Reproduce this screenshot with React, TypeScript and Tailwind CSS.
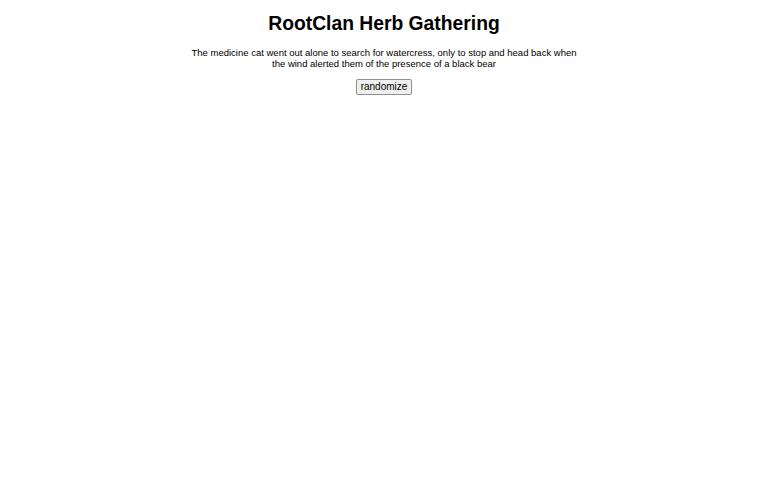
export default function App() {
  return (
    <div className="min-h-screen bg-white font-['Liberation_Sans',Arial,sans-serif] text-black">
      <div className="flex flex-col items-center pt-[13px]">
        <h1 className="text-[19.3px] font-bold leading-[22px]">RootClan Herb Gathering</h1>
        <p className="mt-[12px] max-w-[400px] text-center text-[9.5px] leading-[11px]">
          The medicine cat went out alone to search for watercress, only to stop and head back when the wind alerted them of the presence of a black bear
        </p>
        <button className="mt-[10px] rounded-[2px] border border-[#8f8f8f] bg-[#efefef] px-[4px] text-[10px] leading-[12px] py-px text-black">
          randomize
        </button>
      </div>
    </div>
  );
}
